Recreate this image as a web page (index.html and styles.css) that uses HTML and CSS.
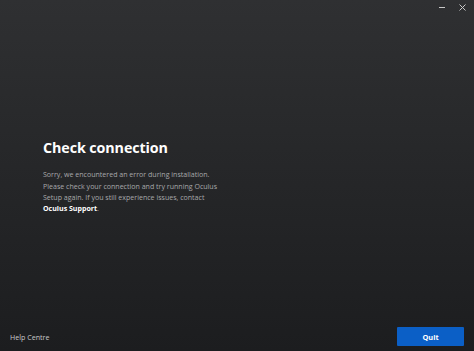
FILE: index.html
```html
<!DOCTYPE html>
<html lang="en">
<head>
    <meta charset="UTF-8">
    <meta name="viewport" content="width=device-width, initial-scale=1.0">
    <title>Oculus Setup</title>
    <link rel="stylesheet" href="styles.css">
</head>
<body>
    <div class="window">
        <div class="titlebar">
            <span class="win-btn minimize"></span>
            <span class="win-btn close">
                <svg width="7" height="7" viewBox="0 0 7 7"><path d="M0.5 0.5 L6.5 6.5 M6.5 0.5 L0.5 6.5" stroke="#c8c8c8" stroke-width="1"/></svg>
            </span>
        </div>

        <div class="content">
            <h1>Check connection</h1>
            <p>Sorry, we encountered an error during installation.<br>Please check your connection and try running Oculus<br>Setup again. If you still experience issues, contact<br><a href="#">Oculus Support</a>.</p>
        </div>

        <div class="footer">
            <a href="#" class="help">Help Centre</a>
            <button class="quit">Quit</button>
        </div>
    </div>
</body>
</html>
```

FILE: styles.css
```css
* {
    margin: 0;
    padding: 0;
    box-sizing: border-box;
    font-family: "Open Sans", "Noto Sans", sans-serif;
}

html, body {
    width: 100%;
    height: 100%;
}

body {
    background: linear-gradient(to bottom, #2f3032 0%, #1c1d1f 100%);
    color: #fff;
}

.window {
    height: 100%;
    display: flex;
    flex-direction: column;
}

/* Title bar */
.titlebar {
    display: flex;
    justify-content: flex-end;
    align-items: center;
    gap: 14px;
    height: 14px;
    padding-right: 8px;
}

.win-btn {
    display: flex;
    align-items: center;
    justify-content: center;
}

.minimize {
    width: 6px;
    height: 1px;
    background-color: #c8c8c8;
    margin-top: 1px;
}

.close svg {
    display: block;
}

/* Content */
.content {
    flex: 1;
    display: flex;
    flex-direction: column;
    justify-content: center;
    padding: 12px 43px 0;
}

.content h1 {
    font-size: 14.3px;
    font-weight: bold;
    color: #fff;
    margin-bottom: 12px;
    letter-spacing: -0.1px;
}

.content p {
    font-size: 7.05px;
    line-height: 11.3px;
    color: #a8a9ab;
    white-space: nowrap;
}

.content p a {
    color: #fff;
    font-weight: bold;
    text-decoration: none;
}

/* Footer */
.footer {
    display: flex;
    justify-content: space-between;
    align-items: center;
    padding: 0 10px 5px 10px;
}

.help {
    color: #c9c9ca;
    font-size: 7.1px;
    text-decoration: none;
}

.quit {
    width: 67px;
    height: 19px;
    background-color: #0b5fc6;
    color: #fff;
    border: none;
    border-radius: 1px;
    font-size: 7.4px;
    font-weight: bold;
}
```
